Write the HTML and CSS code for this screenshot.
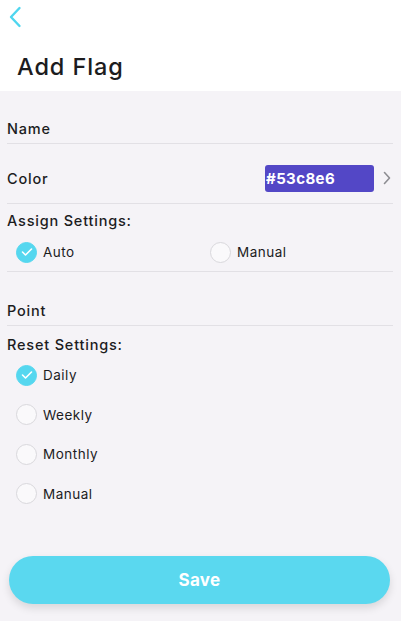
FILE: index.html
```html
<!DOCTYPE html>
<html>
<head>
<meta charset="utf-8">
<link rel="stylesheet" href="styles.css">
</head>
<body>
<div class="screen">
  <header class="header">
    <div class="back">
      <svg width="14" height="22" viewBox="0 0 14 22"><path d="M11.5 2 L3 11 L11.5 20" fill="none" stroke="#4fd6ef" stroke-width="2.4" stroke-linecap="round" stroke-linejoin="round"/></svg>
    </div>
    <h1 class="title">Add Flag</h1>
  </header>
  <main class="content">
    <div class="row field name-row">
      <span class="label">Name</span>
    </div>
    <div class="row field color-row">
      <span class="label">Color</span>
      <div class="color-right">
        <span class="pill">#53c8e6</span>
        <svg class="chev" width="8" height="14" viewBox="0 0 8 14"><path d="M1.5 1.5 L6.5 7 L1.5 12.5" fill="none" stroke="#8d8d92" stroke-width="1.6" stroke-linecap="round" stroke-linejoin="round"/></svg>
      </div>
    </div>
    <div class="group assign">
      <div class="label">Assign Settings:</div>
      <div class="radios-inline">
        <div class="radio checked"><span class="dot"><svg width="12" height="10" viewBox="0 0 12 10"><path d="M1.5 5 L4.5 8 L10.5 2" fill="none" stroke="#fff" stroke-width="1.6" stroke-linecap="round" stroke-linejoin="round"/></svg></span><span class="rtext">Auto</span></div>
        <div class="radio"><span class="dot"></span><span class="rtext">Manual</span></div>
      </div>
    </div>
    <div class="row field point">
      <span class="label">Point</span>
    </div>
    <div class="group reset">
      <div class="label">Reset Settings:</div>
      <div class="radios-list">
        <div class="radio checked"><span class="dot"><svg width="12" height="10" viewBox="0 0 12 10"><path d="M1.5 5 L4.5 8 L10.5 2" fill="none" stroke="#fff" stroke-width="1.6" stroke-linecap="round" stroke-linejoin="round"/></svg></span><span class="rtext">Daily</span></div>
        <div class="radio"><span class="dot"></span><span class="rtext">Weekly</span></div>
        <div class="radio"><span class="dot"></span><span class="rtext">Monthly</span></div>
        <div class="radio"><span class="dot"></span><span class="rtext">Manual</span></div>
      </div>
    </div>
    <div class="spacer"></div>
    <button class="save">Save</button>
  </main>
</div>
</body>
</html>
```

FILE: styles.css
```css
html, body {
  margin: 0;
  padding: 0;
}
body {
  width: 401px;
  height: 621px;
  overflow: hidden;
  font-family: Inter, "Noto Sans", sans-serif;
  color: #1c1c1e;
  background: #f5f3f7;
}
.screen {
  display: flex;
  flex-direction: column;
  height: 621px;
}
.header {
  background: #ffffff;
  height: 91px;
  box-sizing: border-box;
  padding: 6px 0 0 0;
}
.back {
  padding-left: 8px;
  height: 22px;
}
.back svg { display: block; }
.title {
  margin: 24px 0 0 17px;
  font-size: 23.5px;
  font-weight: 500;
  line-height: 30px;
  letter-spacing: 0.9px;
}
.content {
  flex: 1;
  display: flex;
  flex-direction: column;
  padding: 0 8px 0 7px;
}
.label {
  font-size: 14.5px;
  font-weight: 500;
  letter-spacing: 0.8px;
}
.field {
  display: flex;
  align-items: center;
  border-bottom: 1px solid #e2e0e5;
  box-sizing: border-box;
}
.name-row {
  height: 53px;
  align-items: flex-end;
  padding-bottom: 6px;
}
.color-row {
  height: 60px;
  padding-top: 9px;
  justify-content: space-between;
}
.color-right {
  display: flex;
  align-items: center;
  gap: 9px;
  padding-right: 2px;
}
.pill {
  width: 109px;
  height: 27px;
  box-sizing: border-box;
  background: #5347c6;
  border-radius: 3px;
  color: #fff;
  font-weight: 700;
  font-size: 15px;
  line-height: 27px;
  padding-left: 1px;
  letter-spacing: 0.4px;
}
.chev { display: block; }
.group {
  border-bottom: 1px solid #e2e0e5;
}
.assign {
  padding-top: 8px;
  height: 68px;
  box-sizing: border-box;
}
.radios-inline {
  display: grid;
  grid-template-columns: 194px 1fr;
  margin-top: 12px;
  padding-left: 9px;
}
.radio {
  display: flex;
  align-items: center;
  gap: 6px;
  height: 22px;
}
.dot {
  width: 19px;
  height: 19px;
  border-radius: 50%;
  border: 1px solid #d9d8dc;
  background: #faf9fb;
  display: flex;
  align-items: center;
  justify-content: center;
  flex: none;
}
.radio.checked .dot {
  border-color: #55d7ef;
  background: #55d7ef;
}
.dot svg { display: block; }
.rtext {
  font-size: 13.5px;
  letter-spacing: 0.5px;
}
.point {
  height: 54px;
  align-items: flex-end;
  padding-bottom: 6px;
}
.reset {
  border-bottom: none;
  padding-top: 10px;
}
.radios-list {
  display: flex;
  flex-direction: column;
  gap: 17.5px;
  margin-top: 11px;
  padding-left: 9px;
}
.spacer { flex: 1; }
.save {
  margin: 0 3px 17px 2px;
  height: 48px;
  border: none;
  border-radius: 24px;
  background: #5ad8ef;
  color: #fff;
  font-family: Inter, "Noto Sans", sans-serif;
  font-size: 17px;
  font-weight: 700;
  letter-spacing: 0.3px;
  box-shadow: 0 4px 8px rgba(0, 0, 0, 0.12);
}
```
